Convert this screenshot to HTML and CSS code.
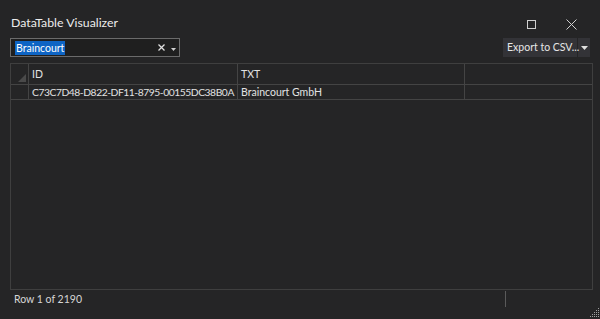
FILE: index.html
```html
<!DOCTYPE html>
<html>
<head>
<meta charset="utf-8">
<link rel="stylesheet" href="styles.css">
</head>
<body>
<div class="window">
  <div class="titlebar">
    <span class="title">DataTable Visualizer</span>
    <div class="winctl">
      <span class="ctl max"><svg width="10" height="10" viewBox="0 0 10 10"><rect x="0.5" y="0.5" width="8" height="8" fill="none" stroke="#cfcfcf" stroke-width="1"/></svg></span>
      <span class="ctl close"><svg width="11" height="11" viewBox="0 0 11 11"><path d="M0.5 0.5 L10.5 10.5 M10.5 0.5 L0.5 10.5" stroke="#cfcfcf" stroke-width="1"/></svg></span>
    </div>
  </div>
  <div class="toolbar">
    <div class="search">
      <span class="sel">Braincourt</span>
      <span class="clear"><svg width="7" height="7" viewBox="0 0 7 7"><path d="M0.5 0.5 L6.5 6.5 M6.5 0.5 L0.5 6.5" stroke="#e0e0e0" stroke-width="1.3"/></svg></span>
      <span class="caret"><svg width="5" height="3" viewBox="0 0 5 3"><path d="M0 0 H5 L2.5 3 Z" fill="#cfcfcf"/></svg></span>
    </div>
    <div class="export">
      <span class="exlabel">Export to CSV...</span>
      <span class="exdrop"><svg width="7" height="4" viewBox="0 0 7 4"><path d="M0 0 H7 L3.5 4 Z" fill="#e0e0e0"/></svg></span>
    </div>
  </div>
  <div class="grid">
    <div class="row head">
      <div class="cell rh"><svg width="8" height="8" viewBox="0 0 8 8"><path d="M8 0 V8 H0 Z" fill="#4a4a4a"/></svg></div>
      <div class="cell c1">ID</div>
      <div class="cell c2">TXT</div>
      <div class="cell c3"></div>
    </div>
    <div class="row data">
      <div class="cell rh"></div>
      <div class="cell c1 mono">C73C7D48-D822-DF11-8795-00155DC38B0A</div>
      <div class="cell c2">Braincourt GmbH</div>
      <div class="cell c3"></div>
    </div>
  </div>
  <div class="status">
    <span class="stext">Row 1 of 2190</span>
    <span class="ssep"></span>
    <span class="grip"><svg width="10" height="10" viewBox="0 0 10 10" fill="#a0a0a0"><rect x="8" y="0" width="1" height="1"/><rect x="6" y="2" width="1" height="1"/><rect x="8" y="2" width="1" height="1"/><rect x="4" y="4" width="1" height="1"/><rect x="6" y="4" width="1" height="1"/><rect x="8" y="4" width="1" height="1"/><rect x="2" y="6" width="1" height="1"/><rect x="4" y="6" width="1" height="1"/><rect x="6" y="6" width="1" height="1"/><rect x="8" y="6" width="1" height="1"/><rect x="0" y="8" width="1" height="1"/><rect x="2" y="8" width="1" height="1"/><rect x="4" y="8" width="1" height="1"/><rect x="6" y="8" width="1" height="1"/><rect x="8" y="8" width="1" height="1"/></svg></span>
  </div>
</div>
</body>
</html>
```

FILE: styles.css
```css
* { box-sizing: border-box; }
html, body { margin: 0; padding: 0; }
body {
  background: #252526;
  font-family: "Lato", "Open Sans", sans-serif;
  color: #d8d8d8;
  width: 600px;
  height: 319px;
  overflow: hidden;
}
.window {
  width: 600px;
  height: 319px;
  display: flex;
  flex-direction: column;
  padding: 0 8px 0 10px;
  position: relative;
}
.titlebar {
  height: 38px;
  padding-top: 15px;
  display: flex;
  align-items: flex-start;
}
.title {
  font-size: 12.3px;
  color: #ececec;
  padding-left: 1px;
  line-height: 16px;
}
.winctl {
  margin-left: auto;
  display: flex;
  gap: 29px;
  padding-top: 5px;
  padding-right: 15px;
}
.ctl { display: block; line-height: 0; }
.ctl.close { margin-top: -1px; }
.toolbar {
  height: 19px;
  display: flex;
  align-items: stretch;
}
.search {
  width: 170px;
  border: 1px solid #6b6b6b;
  background: #1f1f1f;
  display: flex;
  align-items: center;
  padding-left: 4px;
}
.sel {
  background: #0e64c4;
  color: #ffffff;
  font-size: 10.5px;
  line-height: 14px;
  padding: 0 1px;
}
.clear {
  margin-left: auto;
  display: block;
  line-height: 0;
}
.caret {
  display: block;
  line-height: 0;
  margin: 1px 3px 0 6px;
}
.export {
  margin-left: auto;
  margin-right: 2px;
  width: 87px;
  background: #333337;
  display: flex;
  align-items: center;
}
.exlabel {
  font-size: 10.5px;
  color: #e6e6e6;
  padding-left: 4px;
  width: 75px;
  border-right: 1px solid #252526;
  line-height: 19px;
  white-space: nowrap;
}
.exdrop {
  flex: 1;
  display: flex;
  justify-content: center;
  line-height: 0;
}
.grid {
  margin-top: 6px;
  width: 583px;
  height: 227px;
  border: 1px solid #3f3f3f;
  display: flex;
  flex-direction: column;
}
.row {
  display: flex;
  border-bottom: 1px solid #444444;
}
.row.head { height: 21px; }
.row.data { height: 15px; }
.cell {
  border-right: 1px solid #444444;
  font-size: 10.5px;
  color: #e2e2e2;
  padding-left: 3px;
  display: flex;
  align-items: center;
  white-space: nowrap;
  overflow: hidden;
}
.cell.mono { font-size: 10.3px; letter-spacing: -0.45px; }
.rh { width: 18px; padding: 0 2px 2px 0; justify-content: flex-end; align-items: flex-end; }
.c1 { width: 209px; }
.c2 { width: 227px; }
.c3 { flex: 1; border-right: none; }
.status {
  flex: 1;
  display: flex;
  align-items: flex-start;
  position: relative;
}
.stext {
  font-size: 10.5px;
  color: #d6d6d6;
  padding: 1px 0 0 4px;
  line-height: 16px;
}
.ssep {
  margin-left: auto;
  margin-right: 86px;
  width: 1px;
  height: 16px;
  background: #5a5a5a;
  margin-top: 1px;
}
.grip {
  position: absolute;
  right: -8px;
  bottom: 1px;
  line-height: 0;
}
```
